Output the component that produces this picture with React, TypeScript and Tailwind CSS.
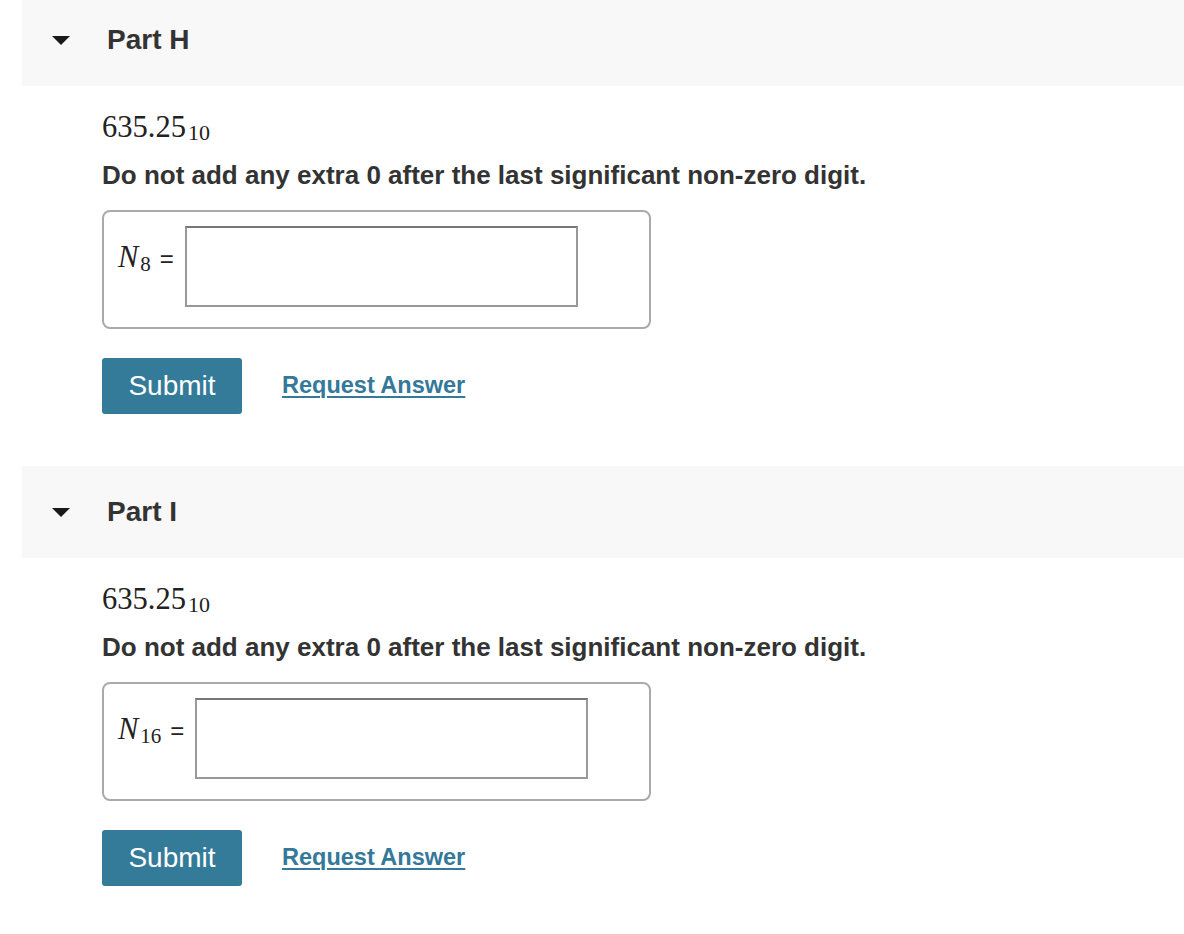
import React from "react";

function Section({ title, sub, first }: { title: string; sub: string; first?: boolean }) {
  return (
    <div className={first ? "-mt-[6px]" : "mt-[52px]"}>
      <div className="ml-[22px] h-[92px] bg-[#f8f8f8] flex items-center">
        <svg width="18" height="9" viewBox="0 0 18 9" className="ml-[30px]">
          <polygon points="0,0 18,0 9,9" fill="#1a1a1a" />
        </svg>
        <div className="ml-[37px] text-[28px] font-bold text-[#333] leading-none" style={{ fontFamily: '"Liberation Sans", Arial, sans-serif' }}>
          {title}
        </div>
      </div>
      <div className="pl-[102px]">
        <div className="mt-[21px] h-[40px] flex items-center text-[#222]" style={{ fontFamily: '"Liberation Serif", "Times New Roman", serif' }}>
          <span className="text-[30.5px] leading-none">635.25</span>
          <span className="text-[22px] leading-none relative top-[6px] ml-[2px]">10</span>
        </div>
        <div className="mt-[12px] text-[26px] font-bold text-[#333] leading-[32px]" style={{ fontFamily: '"Liberation Sans", Arial, sans-serif' }}>
          Do not add any extra 0 after the last significant non-zero digit.
        </div>
        <div className="mt-[19px] w-[549px] h-[119px] border-2 border-[#aaaaaa] rounded-[8px] flex items-start pt-[14px] pl-[14px]">
          <div className="flex items-center h-[62px] pr-[11px] text-[#222]" style={{ fontFamily: '"Liberation Serif", "Times New Roman", serif' }}>
            <span className="italic text-[30.5px] leading-none">N</span>
            <span className="text-[21px] leading-none relative top-[7px] ml-[2px]">{sub}</span>
            <span className="text-[24px] leading-none ml-[9px] relative top-[2px]" style={{ fontFamily: '"Liberation Sans", Arial, sans-serif' }}>=</span>
          </div>
          <div className="w-[393px] h-[81px] border-2 border-[#999999] border-t-[#777777] bg-white" />
        </div>
        <div className="mt-[29px] flex items-center">
          <button className="w-[140px] h-[56px] rounded-[3px] bg-[#347b99] text-white text-[28px] leading-none" style={{ fontFamily: '"Liberation Sans", Arial, sans-serif' }}>
            Submit
          </button>
          <a href="#" className="ml-[40px] text-[23.5px] font-bold text-[#34799a] underline underline-offset-[3px] decoration-2" style={{ fontFamily: '"Liberation Sans", Arial, sans-serif' }}>
            Request Answer
          </a>
        </div>
      </div>
    </div>
  );
}

export default function App() {
  return (
    <div className="w-[1184px] h-[934px] bg-white overflow-hidden">
      <Section title="Part H" sub="8" first />
      <Section title="Part I" sub="16" />
    </div>
  );
}
